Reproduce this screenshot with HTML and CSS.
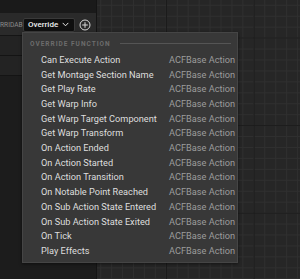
FILE: index.html
```html
<!DOCTYPE html>
<html>
<head>
<meta charset="utf-8">
<link rel="stylesheet" href="styles.css">
</head>
<body>
<div class="app">
  <div class="left">
    <div class="topstrip"></div>
    <div class="tabbar">
      <span class="lbl">RRIDAB</span>
      <div class="dd">
        <span class="ddtext">Override</span>
        <svg class="chev" width="7" height="5" viewBox="0 0 7 5"><path d="M0.7 0.9 L3.5 3.8 L6.3 0.9" fill="none" stroke="#e6e6e6" stroke-width="1"/></svg>
      </div>
      <svg class="plus" width="12" height="12" viewBox="0 0 12 12"><circle cx="6" cy="6" r="5" fill="none" stroke="#d8d8d8" stroke-width="1"/><path d="M6 3.2 V8.8 M3.2 6 H8.8" stroke="#d8d8d8" stroke-width="1"/></svg>
    </div>
    <div class="lrow"></div>
    <div class="lrow"></div>
    <div class="lrest"></div>
  </div>
  <div class="graph"></div>
  <div class="menu">
    <div class="mhead"><span class="mtitle">OVERRIDE FUNCTION</span><span class="mline"></span></div>
    <div class="item"><span class="name">Can Execute Action</span><span class="src">ACFBase Action</span></div>
    <div class="item"><span class="name">Get Montage Section Name</span><span class="src">ACFBase Action</span></div>
    <div class="item"><span class="name">Get Play Rate</span><span class="src">ACFBase Action</span></div>
    <div class="item"><span class="name">Get Warp Info</span><span class="src">ACFBase Action</span></div>
    <div class="item"><span class="name">Get Warp Target Component</span><span class="src">ACFBase Action</span></div>
    <div class="item"><span class="name">Get Warp Transform</span><span class="src">ACFBase Action</span></div>
    <div class="item"><span class="name">On Action Ended</span><span class="src">ACFBase Action</span></div>
    <div class="item"><span class="name">On Action Started</span><span class="src">ACFBase Action</span></div>
    <div class="item"><span class="name">On Action Transition</span><span class="src">ACFBase Action</span></div>
    <div class="item"><span class="name">On Notable Point Reached</span><span class="src">ACFBase Action</span></div>
    <div class="item"><span class="name">On Sub Action State Entered</span><span class="src">ACFBase Action</span></div>
    <div class="item"><span class="name">On Sub Action State Exited</span><span class="src">ACFBase Action</span></div>
    <div class="item"><span class="name">On Tick</span><span class="src">ACFBase Action</span></div>
    <div class="item"><span class="name">Play Effects</span><span class="src">ACFBase Action</span></div>
  </div>
</div>
</body>
</html>
```

FILE: styles.css
```css
* { box-sizing: border-box; }
html, body {
  margin: 0;
  padding: 0;
  width: 300px;
  height: 279px;
  overflow: hidden;
  background: #262626;
  font-family: Roboto, "Liberation Sans", sans-serif;
}
.app {
  position: relative;
  display: flex;
  width: 300px;
  height: 279px;
}
.left {
  width: 97px;
  flex: none;
  display: flex;
  flex-direction: column;
  background: #1b1b1b;
  border-right: 1px solid #141414;
}
.topstrip {
  height: 13px;
  background: #1a1a1a;
}
.tabbar {
  height: 23px;
  display: flex;
  align-items: center;
  background: #2a2a2a;
  border-bottom: 1px solid #151515;
  overflow: hidden;
  padding-top: 1px;
}
.lbl {
  width: 23px;
  flex: none;
  font-size: 6.6px;
  color: #8a8a8a;
  white-space: nowrap;
}
.dd {
  width: 52px;
  height: 14px;
  flex: none;
  display: flex;
  align-items: center;
  padding-left: 4px;
  background: #0f0f0f;
  border: 1px solid #3a3a3a;
  border-radius: 2px;
}
.ddtext {
  font-size: 8px;
  font-weight: 500;
  color: #eeeeee;
}
.chev {
  margin-left: 4px;
}
.plus {
  margin-left: 4px;
  flex: none;
}
.lrow {
  height: 20px;
  background: #232323;
  border-bottom: 1px solid #141414;
}
.lrest {
  flex: 1;
  background: #1c1c1c;
}
.graph {
  flex: 1;
  background-color: #262626;
  background-image:
    linear-gradient(to right, #1b1b1b 1px, transparent 1px),
    linear-gradient(to bottom, #1b1b1b 1px, transparent 1px),
    linear-gradient(to right, #2f2f2f 1px, transparent 1px),
    linear-gradient(to bottom, #2f2f2f 1px, transparent 1px);
  background-size: 87.6px 87.6px, 87.6px 87.6px, 10.95px 10.95px, 10.95px 10.95px;
  background-position: 69px 37.5px, 69px 37.5px, 3.2px 4.8px, 3.2px 4.8px;
}
.menu {
  position: absolute;
  left: 22px;
  top: 32px;
  width: 216px;
  height: 231px;
  background: #383838;
  border: 1px solid #454545;
  box-shadow: 0 1px 3px rgba(0,0,0,0.5);
}
.mhead {
  height: 19.15px;
  padding-top: 2.6px;
  display: flex;
  align-items: center;
  padding-left: 7px;
  padding-right: 6px;
}
.mtitle {
  font-size: 6.5px;
  font-weight: 700;
  letter-spacing: 1px;
  color: #6c6c6c;
  white-space: nowrap;
}
.mline {
  flex: 1;
  height: 1px;
  margin-left: 9px;
  background: #555555;
}
.item {
  height: 14.7px;
  display: flex;
  align-items: center;
  justify-content: space-between;
  padding-left: 18px;
  padding-right: 2px;
  font-size: 9.2px;
  white-space: nowrap;
}
.name { color: #dedede; }
.src { color: #9c9c9c; }
```
